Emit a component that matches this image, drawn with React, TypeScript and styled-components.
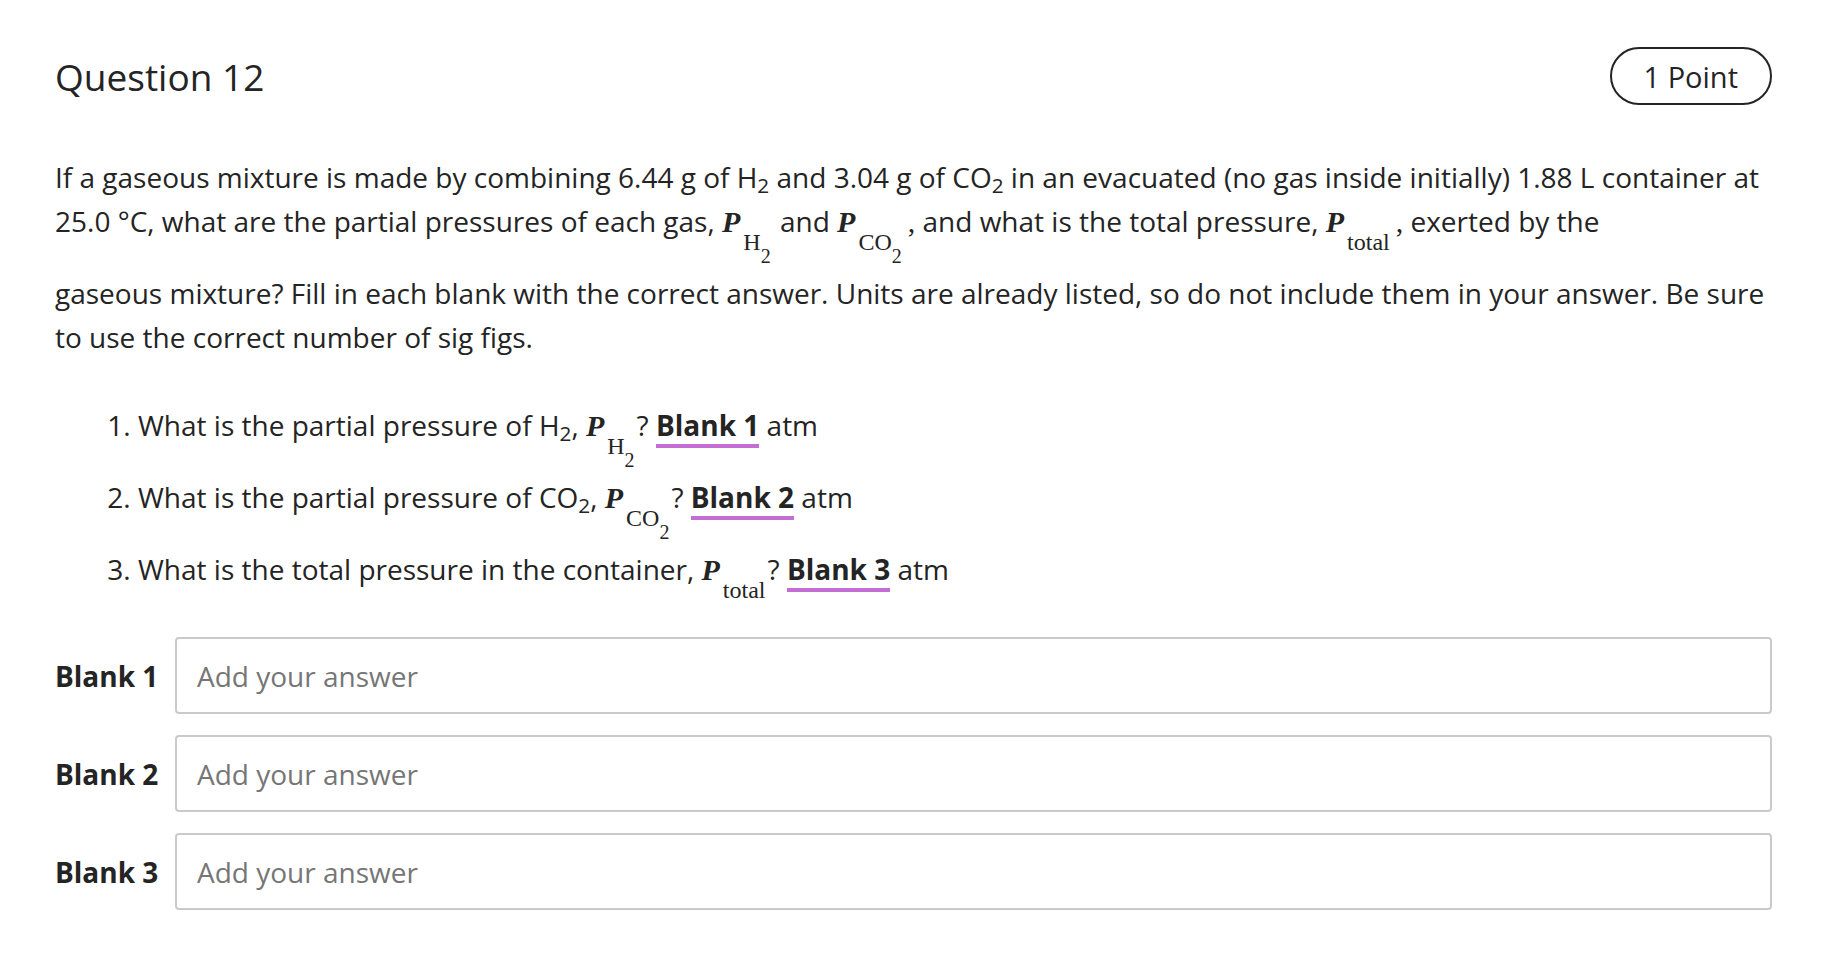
import React from 'react';
import styled, { createGlobalStyle } from 'styled-components';

const GlobalStyle = createGlobalStyle`
  body {
    margin: 0;
    background: #ffffff;
    font-family: 'Open Sans', 'Noto Sans', sans-serif;
    color: #242424;
  }
`;

const Page = styled.main`
  padding: 47px 56px 40px 55px;
`;

const Header = styled.header`
  display: flex;
  align-items: center;
  justify-content: space-between;
`;

const Title = styled.h2`
  margin: 0;
  font-size: 37px;
  font-weight: 400;
  color: #242424;
`;

const PointsPill = styled.span`
  display: inline-flex;
  align-items: center;
  box-sizing: border-box;
  height: 58px;
  padding: 0 32px;
  border: 2px solid #242424;
  border-radius: 29px;
  font-size: 29px;
`;

const Prompt = styled.p`
  margin: 50px 0 0;
  font-size: 28px;
  line-height: 44px;
`;

const ChemSub = styled.sub`
  font-size: 0.74em;
  line-height: 0;
  vertical-align: -0.22em;
`;

const MathVar = styled.span`
  font-family: 'Liberation Serif', serif;
  font-style: italic;
  font-weight: 700;
  font-size: 30px;
`;

const MathSub = styled.span<{ $shift?: number }>`
  font-family: 'Liberation Serif', serif;
  font-style: normal;
  font-size: 24px;
  line-height: 1;
  vertical-align: ${(p) => -(p.$shift ?? 18)}px;
  margin-left: 3px;
  padding-right: 2px;
`;

const MathSubIndex = styled.span`
  font-size: 20px;
  line-height: 30px;
  vertical-align: -13px;
`;

const MathComma = styled.span`
  font-family: 'Liberation Serif', serif;
  font-size: 30px;
  margin-left: 4px;
`;

const Questions = styled.ol`
  margin: 44px 0 0;
  padding-left: 83px;
  font-size: 28px;
  line-height: 44px;
`;

const QuestionItem = styled.li`
  margin-bottom: 0;
`;

const BlankRef = styled.span`
  font-weight: 700;
  border-bottom: 4px solid #c46ed4;
`;

const Answers = styled.div`
  display: flex;
  flex-direction: column;
  gap: 21px;
  margin-top: 35px;
`;

const AnswerRow = styled.label`
  display: flex;
  align-items: center;
  gap: 16px;
`;

const AnswerLabel = styled.span`
  flex: 0 0 104px;
  font-size: 28px;
  font-weight: 700;
  color: #242424;
`;

const AnswerInput = styled.input`
  flex: 1;
  box-sizing: border-box;
  height: 77px;
  padding: 0 20px;
  border: 2px solid #cacaca;
  border-radius: 4px;
  font-family: 'Open Sans', 'Noto Sans', sans-serif;
  font-size: 28px;
  color: #242424;
  outline: none;

  &::placeholder {
    color: #767676;
  }
`;

function Pressure({ gas }: { gas: 'H' | 'CO' | 'total' }) {
  if (gas === 'total') {
    return (
      <>
        <MathVar>P</MathVar>
        <MathSub $shift={18}>total</MathSub>
      </>
    );
  }
  return (
    <>
      <MathVar>P</MathVar>
      <MathSub>
        {gas}
        <MathSubIndex>2</MathSubIndex>
      </MathSub>
    </>
  );
}

const blanks = ['Blank 1', 'Blank 2', 'Blank 3'];

export default function App() {
  return (
    <>
      <GlobalStyle />
      <Page>
        <Header>
          <Title>Question 12</Title>
          <PointsPill>1 Point</PointsPill>
        </Header>

        <Prompt>
          If a gaseous mixture is made by combining 6.44 g of H<ChemSub>2</ChemSub> and 3.04 g of
          CO<ChemSub>2</ChemSub> in an evacuated (no gas inside initially) 1.88 L container at 25.0
          °C, what are the partial pressures of each gas, <Pressure gas="H" /> and{' '}
          <Pressure gas="CO" />
          <MathComma>,</MathComma> and what is the total pressure, <Pressure gas="total" />
          <MathComma>,</MathComma> exerted by the
          <br />
          gaseous mixture? Fill in each blank with the correct answer. Units are already listed, so
          do not include them in your answer. Be sure to use the correct number of sig figs.
        </Prompt>

        <Questions>
          <QuestionItem>
            What is the partial pressure of H<ChemSub>2</ChemSub>, <Pressure gas="H" />?{' '}
            <BlankRef>Blank 1</BlankRef> atm
          </QuestionItem>
          <QuestionItem>
            What is the partial pressure of CO<ChemSub>2</ChemSub>, <Pressure gas="CO" />?{' '}
            <BlankRef>Blank 2</BlankRef> atm
          </QuestionItem>
          <QuestionItem>
            What is the total pressure in the container, <Pressure gas="total" />?{' '}
            <BlankRef>Blank 3</BlankRef> atm
          </QuestionItem>
        </Questions>

        <Answers>
          {blanks.map((b) => (
            <AnswerRow key={b}>
              <AnswerLabel>{b}</AnswerLabel>
              <AnswerInput type="text" placeholder="Add your answer" />
            </AnswerRow>
          ))}
        </Answers>
      </Page>
    </>
  );
}
